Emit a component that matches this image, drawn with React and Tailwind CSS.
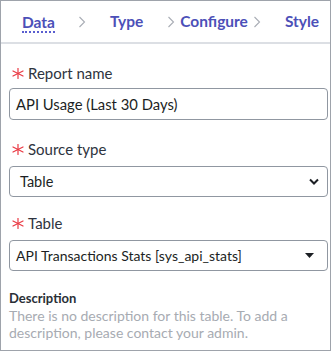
import React from 'react'

const font = { fontFamily: 'Lato, "Noto Sans", sans-serif' }

function Asterisk() {
  return (
    <svg width="12" height="11" viewBox="0 0 12 11" className="ml-[3px] mr-[4px] shrink-0">
      <g stroke="#ea3a44" strokeWidth="1.2" strokeLinecap="round">
        <line x1="6" y1="0.5" x2="6" y2="10.5" />
        <line x1="1" y1="3" x2="11" y2="8" />
        <line x1="1" y1="8" x2="11" y2="3" />
      </g>
    </svg>
  )
}

function Chevron() {
  return (
    <svg width="8" height="12" viewBox="0 0 8 12">
      <path d="M1.5 1 L6.5 6 L1.5 11" fill="none" stroke="#a9adb5" strokeWidth="1.1" />
    </svg>
  )
}

function Label({ children }) {
  return (
    <div className="flex items-center h-[20px] text-[15px] text-[#2e3440]">
      <Asterisk />
      <span>{children}</span>
    </div>
  )
}

function App() {
  return (
    <div className="w-[331px] h-[351px] bg-white border border-[#9ea3ab] overflow-hidden" style={font}>
      <div className="h-[43px] border-b-2 border-[#dcdfe4] flex items-center pl-[21px] pr-[10px] text-[15.5px] font-bold text-[#4c50b8]">
        <span className="border-b-2 border-dotted border-[#5a5ed0] leading-[18px] pt-[2px]">Data</span>
        <span className="ml-[23px]"><Chevron /></span>
        <span className="ml-[24px]">Type</span>
        <span className="ml-[24px]"><Chevron /></span>
        <span className="ml-[5px]">Configure</span>
        <span className="ml-[5px]"><Chevron /></span>
        <span className="ml-[24px]">Style</span>
      </div>

      <div className="pl-[8px] pr-[2px] pt-[19px]">
        <Label>Report name</Label>
        <div className="mt-[5px] h-[32px] border border-[#9097a1] rounded-[4px] flex items-center px-[6px] text-[14.8px] text-[#1c1f24]">
          API Usage (Last 30 Days)
        </div>

        <div className="mt-[19px]">
          <Label>Source type</Label>
        </div>
        <div className="mt-[7px] h-[31px] border border-[#9097a1] rounded-[4px] flex items-center justify-between pl-[10px] pr-[8px] text-[14.5px] text-[#1c1f24]">
          <span>Table</span>
          <svg width="10" height="7" viewBox="0 0 10 7">
            <path d="M1 1.5 L5 5.5 L9 1.5" fill="none" stroke="#1c1f24" strokeWidth="2" />
          </svg>
        </div>

        <div className="mt-[16px]">
          <Label>Table</Label>
        </div>
        <div className="mt-[7px] h-[31px] border border-[#9097a1] rounded-[4px] flex items-center justify-between pl-[6px] pr-[13px] text-[14px] text-[#1c1f24]">
          <span>API Transactions Stats [sys_api_stats]</span>
          <svg width="9" height="5" viewBox="0 0 9 5">
            <path d="M0 0 L9 0 L4.5 5 Z" fill="#1c1f24" />
          </svg>
        </div>

        <div className="mt-[19px] text-[13px] font-bold text-[#2a2f36] leading-[17px]">Description</div>
        <div className="text-[14px] text-[#a7abb2] leading-[17px] pr-[10px]">
          There is no description for this table. To add a description, please contact your admin.
        </div>
      </div>
    </div>
  )
}

export default App
